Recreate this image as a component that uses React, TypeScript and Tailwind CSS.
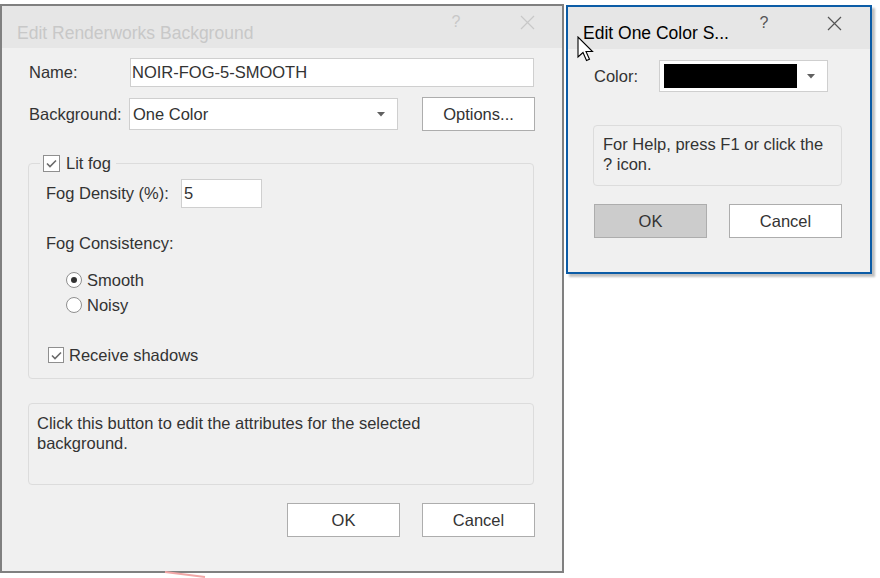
import React from "react";

const font = { fontFamily: '"Liberation Sans", Arial, sans-serif' };

function CloseIcon({ color }: { color: string }) {
  return (
    <svg width="15" height="15" viewBox="0 0 15 15" className="block">
      <path d="M1 1 L14 14 M14 1 L1 14" stroke={color} strokeWidth="1.2" fill="none" />
    </svg>
  );
}

function Check({ size }: { size: number }) {
  return (
    <span
      className="flex shrink-0 items-center justify-center border border-[#8f8f8f] bg-white"
      style={{ width: size, height: size }}
    >
      <svg width="11" height="9" viewBox="0 0 11 9">
        <path d="M1 4.5 L4 7.5 L10 1.5" stroke="#6a6a6a" strokeWidth="1.6" fill="none" />
      </svg>
    </span>
  );
}

function Radio({ on }: { on?: boolean }) {
  return (
    <span className="flex h-[16px] w-[16px] shrink-0 items-center justify-center rounded-full border border-[#8f8f8f] bg-white">
      {on && <span className="h-[6px] w-[6px] rounded-full bg-[#333]" />}
    </span>
  );
}

function Arrow() {
  return (
    <svg width="8" height="5" viewBox="0 0 8 5" className="block">
      <path d="M0 0 L8 0 L4 4.5 Z" fill="#606060" />
    </svg>
  );
}

function Btn({ children, pressed }: { children: React.ReactNode; pressed?: boolean }) {
  return (
    <button
      type="button"
      className={
        pressed
          ? "flex h-[34px] w-[113px] items-center justify-center border border-[#adadad] bg-[#cccccc] text-[16.5px] text-[#333]"
          : "flex h-[34px] w-[113px] items-center justify-center border border-[#adadad] bg-white text-[16.5px] text-[#333]"
      }
    >
      {children}
    </button>
  );
}

export default function App() {
  return (
    <div className="relative h-[578px] w-[880px] overflow-hidden bg-white" style={font}>
      {/* main dialog (inactive) */}
      <div className="absolute left-0 top-[4px] flex h-[569px] w-[564px] flex-col border-2 border-[#808080] bg-[#f0f0f0] text-[16.5px] text-[#333]">
        <div className="flex h-[42px] shrink-0 bg-[#e6e6e6]">
          <span className="pl-[15px] pt-[17px] text-[17.5px] leading-[20px] text-[#c8c8c8]">
            Edit Renderworks Background
          </span>
          <div className="ml-auto mr-[27px] flex items-start pt-[6px]">
            <span className="w-[20px] text-center text-[16px] leading-[20px] text-[#c8c8c8]">?</span>
            <span className="ml-[54px] mt-[3px]">
              <CloseIcon color="#c8c8c8" />
            </span>
          </div>
        </div>

        <div className="flex flex-col pl-[26px] pr-[28px]">
          <div className="mt-[10px] flex h-[29px] items-center">
            <span className="w-[102px] pl-[1px]">Name:</span>
            <div className="flex h-[29px] flex-1 items-center border border-[#cfcfcf] bg-white pl-[1px]">
              NOIR-FOG-5-SMOOTH
            </div>
          </div>

          <div className="mt-[10px] flex h-[34px] items-center">
            <span className="w-[101px] pl-[1px]">Background:</span>
            <div className="flex h-[32px] w-[269px] items-center border border-[#cfcfcf] bg-white pl-[3px] pr-[12px]">
              <span className="flex-1">One Color</span>
              <Arrow />
            </div>
            <div className="ml-auto mr-[-1px] flex">
              <Btn>Options...</Btn>
            </div>
          </div>

          <fieldset className="mt-[22px] h-[226px] rounded-[4px] border border-[#dcdcdc]">
            <legend className="ml-[11px] flex h-[20px] items-center gap-[6px] pl-[3px] pr-[5px]">
              <Check size={17} />
              <span>Lit fog</span>
            </legend>
            <div className="flex flex-col pl-[17px]">
              <div className="mt-[6px] flex h-[29px] items-center">
                <span className="w-[135px]">Fog Density (%):</span>
                <div className="flex h-[29px] w-[81px] items-center border border-[#cfcfcf] bg-white pl-[2px]">5</div>
              </div>
              <div className="mt-[25px] h-[20px] leading-[20px]">Fog Consistency:</div>
              <div className="mt-[17px] flex flex-col pl-[20px]">
                <div className="flex h-[20px] items-center gap-[5px]">
                  <Radio on />
                  <span>Smooth</span>
                </div>
                <div className="mt-[5px] flex h-[20px] items-center gap-[5px]">
                  <Radio />
                  <span>Noisy</span>
                </div>
              </div>
              <div className="mt-[30px] flex h-[20px] items-center gap-[5px] pl-[2px]">
                <Check size={16} />
                <span>Receive shadows</span>
              </div>
            </div>
          </fieldset>

          <div className="mt-[24px] h-[82px] rounded-[4px] border border-[#dcdcdc] pl-[8px] pt-[9px] leading-[20px]">
            Click this button to edit the attributes for the selected
            <br />
            background.
          </div>

          <div className="mr-[-1px] mt-[18px] flex justify-end gap-[22px]">
            <Btn>OK</Btn>
            <Btn>Cancel</Btn>
          </div>
        </div>
      </div>

      {/* color dialog (active) */}
      <div className="absolute left-[566px] top-[5px] flex h-[269px] w-[306px] flex-col border-2 border-[#0c5ca6] bg-[#f0f0f0] text-[16.5px] text-[#333] shadow-[3px_3px_2px_rgba(0,0,0,0.25)]">
        <div className="flex h-[42px] shrink-0 bg-[#e6e6e6]">
          <span className="pl-[15px] pt-[16px] text-[17.5px] leading-[20px] text-black">Edit One Color S...</span>
          <div className="ml-auto mr-[28px] flex items-start pt-[6px]">
            <span className="w-[20px] text-center text-[16px] leading-[20px] text-[#555]">?</span>
            <span className="ml-[53px] mt-[3px]">
              <CloseIcon color="#555" />
            </span>
          </div>
        </div>
        <div className="flex flex-col pl-[26px] pr-[28px]">
          <div className="mt-[11px] flex h-[32px] items-center">
            <span className="w-[65px]">Color:</span>
            <div className="flex h-[32px] w-[169px] items-center border border-[#cfcfcf] bg-white pl-[4px] pr-[12px]">
              <span className="h-[24px] w-[133px] bg-black" />
              <span className="ml-auto">
                <Arrow />
              </span>
            </div>
          </div>
          <div className="ml-[-1px] mt-[33px] h-[61px] w-[249px] rounded-[4px] border border-[#dcdcdc] pl-[9px] pt-[8px] leading-[20px]">
            For Help, press F1 or click the
            <br />? icon.
          </div>
          <div className="mt-[18px] flex gap-[22px]">
            <Btn pressed>OK</Btn>
            <Btn>Cancel</Btn>
          </div>
        </div>
      </div>

      {/* mouse pointer */}
      <svg className="absolute left-[577px] top-[36px]" width="20" height="28" viewBox="0 0 20 28">
        <path
          d="M1 1 L1 21 L6 16.5 L9.5 24.5 L12.5 23.2 L9 15.5 L15.5 15.5 Z"
          fill="white"
          stroke="black"
          strokeWidth="1.1"
          strokeLinejoin="miter"
        />
      </svg>

      {/* stray pink stroke */}
      <svg className="absolute left-[160px] top-[570px]" width="50" height="8" viewBox="0 0 50 8">
        <path d="M5 2 L45 7" stroke="#f2a6a6" strokeWidth="2" />
      </svg>
    </div>
  );
}
